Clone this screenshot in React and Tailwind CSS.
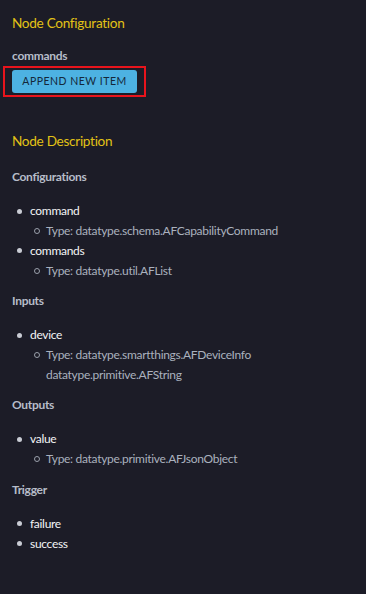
const sections = [
  {
    title: 'Configurations',
    items: [
      { name: 'command', types: ['Type: datatype.schema.AFCapabilityCommand'] },
      { name: 'commands', types: ['Type: datatype.util.AFList'] },
    ],
  },
  {
    title: 'Inputs',
    items: [
      {
        name: 'device',
        types: ['Type: datatype.smartthings.AFDeviceInfo', 'datatype.primitive.AFString'],
      },
    ],
  },
  {
    title: 'Outputs',
    items: [{ name: 'value', types: ['Type: datatype.primitive.AFJsonObject'] }],
  },
  {
    title: 'Trigger',
    items: [{ name: 'failure' }, { name: 'success' }],
  },
]

function Item({ item }) {
  return (
    <li className="flex flex-col">
      <div className="flex items-center h-[20px]">
        <span className="w-[5px] h-[5px] rounded-full bg-[#c9ccd4] ml-[17px] mr-[8px]" />
        <span className="text-[#f3f4f6]">{item.name}</span>
      </div>
      {item.types && (
        <div className="flex">
          <span className="w-[6px] h-[6px] rounded-full border border-[#9aa0ab] ml-[34px] mr-[6px] mt-[7px]" />
          <div className="flex flex-col">
            {item.types.map((t) => (
              <span key={t} className="h-[19.5px] leading-[19.5px] text-[#aab1be]">{t}</span>
            ))}
          </div>
        </div>
      )}
    </li>
  )
}

export default function App() {
  return (
    <div className="w-[366px] h-[594px] bg-[#1c1c27] px-3 pt-[13px] text-[12px] tracking-[-0.3px] font-['Lato',sans-serif] overflow-hidden">
      <h2 className="text-[13.6px] text-[#e2c216] leading-[20px]">Node Configuration</h2>
      <div className="mt-[14px] font-bold text-[#b7bdc9] leading-[18px]">commands</div>
      <div className="-ml-[9px] mt-[1px] w-[143px] h-[31px] border-2 border-[#e8141c] flex items-center pl-[7px]">
        <button className="w-[125px] h-[23px] rounded-[3px] bg-[#4db2e2] text-[#14283a] text-[10.5px] tracking-[0.5px]">
          APPEND NEW ITEM
        </button>
      </div>

      <h2 className="mt-[34px] text-[13.6px] text-[#e2c216] leading-[20px]">Node Description</h2>

      {sections.map((s, i) => (
        <div key={s.title} className={i === 0 ? 'mt-[17px]' : 'mt-[12px]'}>
          <div className="font-bold text-[#b7bdc9] leading-[18px]">{s.title}</div>
          <ul className="-ml-3 mt-[15px] flex flex-col">
            {s.items.map((it) => (
              <Item key={it.name} item={it} />
            ))}
          </ul>
        </div>
      ))}
    </div>
  )
}
